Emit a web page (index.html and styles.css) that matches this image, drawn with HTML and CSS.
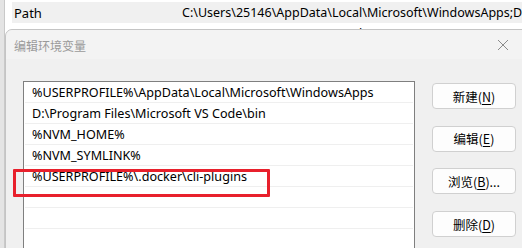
FILE: index.html
```html
<!DOCTYPE html>
<html lang="zh-CN">
<head>
<meta charset="utf-8">
<title>编辑环境变量</title>
<link rel="stylesheet" href="styles.css">
</head>
<body>
<div class="screen">
  <div class="back">
    <div class="back-edge"></div>
    <div class="back-list">
      <div class="back-row selected"><span class="var-name">Path</span><span class="var-value">C:\Users\25146\AppData\Local\Microsoft\WindowsApps;D:\Program Files</span></div>
      <div class="back-row"><span class="var-name">TEMP</span><span class="var-value">C:\Users\25146\AppData\Local\Temp</span></div>
    </div>
  </div>

  <div class="dialog">
    <div class="titlebar">
      <span class="title">编辑环境变量</span>
      <svg class="close" width="12" height="12" viewBox="0 0 12 12"><path d="M1 1 L11 11 M11 1 L1 11" stroke="#8a8a8a" stroke-width="1" fill="none"/></svg>
    </div>
    <div class="content">
      <div class="list">
        <div class="row">%USERPROFILE%\AppData\Local\Microsoft\WindowsApps</div>
        <div class="row">D:\Program Files\Microsoft VS Code\bin</div>
        <div class="row">%NVM_HOME%</div>
        <div class="row">%NVM_SYMLINK%</div>
        <div class="row">%USERPROFILE%\.docker\cli-plugins</div>
        <div class="row"></div>
        <div class="row"></div>
        <div class="row"></div>
      </div>
      <div class="buttons">
        <div class="btn">新建(<u>N</u>)</div>
        <div class="btn">编辑(<u>E</u>)</div>
        <div class="btn">浏览(<u>B</u>)...</div>
        <div class="btn">删除(<u>D</u>)</div>
      </div>
    </div>
  </div>

  <div class="highlight"></div>
</div>
</body>
</html>
```

FILE: styles.css
```css
* { box-sizing: border-box; }
html, body { margin: 0; padding: 0; }
body {
  width: 522px;
  height: 248px;
  overflow: hidden;
  background: #ffffff;
  font-family: "Noto Sans", "Noto Sans CJK SC", sans-serif;
  color: #000;
}
.screen {
  position: relative;
  width: 522px;
  height: 248px;
  overflow: hidden;
}
.back {
  display: flex;
  height: 248px;
}
.back-edge {
  width: 5px;
  flex: none;
  background: #e4e4e4;
  border-right: 1px solid #c9c9c9;
}
.back-list {
  flex: 1;
  min-width: 0;
  padding: 2px 0 0 7px;
}
.back-row {
  display: flex;
  height: 21px;
  align-items: center;
  font-size: 12.5px;
  white-space: nowrap;
  overflow: hidden;
}
.back-row.selected { background: #f0f0f0; }
.var-name { width: 170px; flex: none; padding-left: 2px; font-size: 13px; }
.var-value { flex: none; }

.dialog {
  position: absolute;
  left: 5px;
  top: 29px;
  width: 530px;
  height: 240px;
  background: #f0f0f0;
  border: 1px solid #c4c4c4;
  border-radius: 7px 0 0 0;
}
.titlebar {
  height: 29px;
  display: flex;
  align-items: center;
  padding-left: 8px;
  padding-top: 1px;
  background: #f3f3f3;
  border-radius: 7px 0 0 0;
}
.title {
  font-family: "Noto Sans CJK SC", sans-serif;
  font-size: 12px;
  color: #9a9a9a;
}
.close {
  margin-left: 411px;
}
.content {
  display: flex;
  padding: 22px 0 0 17px;
  gap: 17px;
}
.list {
  width: 392px;
  height: 200px;
  background: #fff;
  border: 1px solid #7f7f7f;
  border-bottom: none;
}
.row {
  height: 21px;
  margin: 0 1px;
  border-bottom: 1px solid #efefef;
  padding: 1px 0 0 7px;
  font-size: 12.6px;
  line-height: 20px;
  white-space: nowrap;
  overflow: hidden;
}
.buttons {
  display: flex;
  flex-direction: column;
  gap: 16.7px;
  padding-top: 2px;
}
.btn {
  width: 84px;
  height: 26px;
  background: #fdfdfd;
  border: 1px solid #d0d0d0;
  border-radius: 4px;
  display: flex;
  align-items: center;
  justify-content: center;
  font-family: "Noto Sans CJK SC", sans-serif;
  font-size: 12.5px;
}
.btn u { text-underline-offset: 2px; }
.highlight {
  position: absolute;
  left: 13px;
  top: 169px;
  width: 257px;
  height: 28px;
  border: 3px solid #e8202c;
  border-radius: 1px;
}
```
